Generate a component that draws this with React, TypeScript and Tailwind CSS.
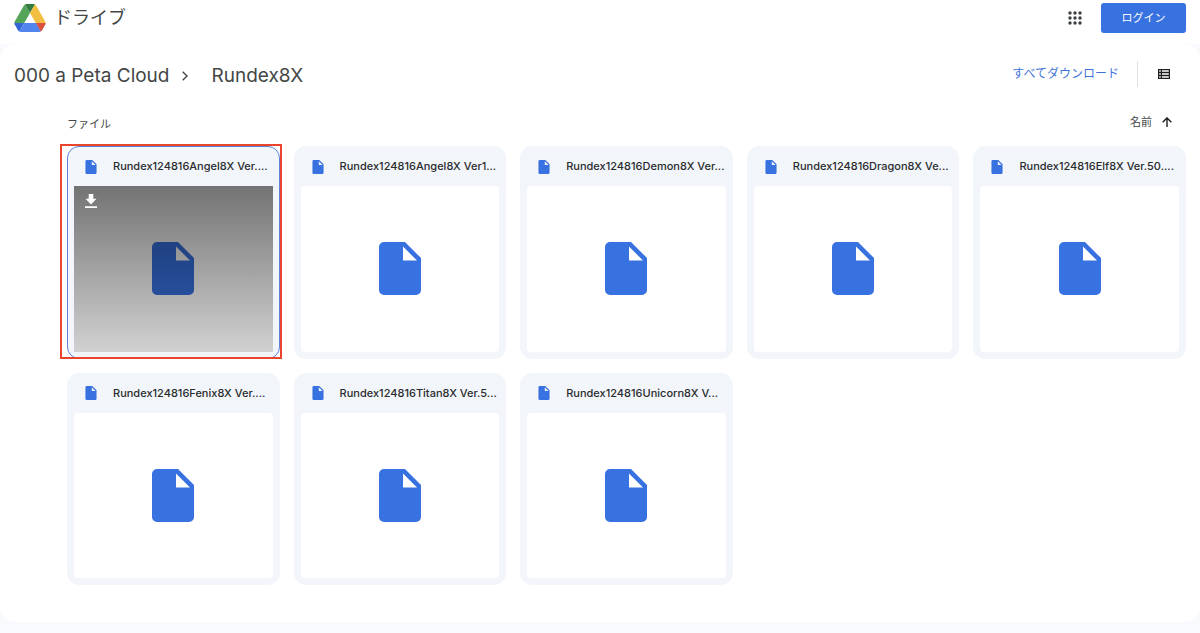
import React from "react";

interface DriveFile {
  id: number;
  name: string;
  selected?: boolean;
}

const files: DriveFile[] = [
  { id: 1, name: "Rundex124816Angel8X Ver....", selected: true },
  { id: 2, name: "Rundex124816Angel8X Ver1..." },
  { id: 3, name: "Rundex124816Demon8X Ver..." },
  { id: 4, name: "Rundex124816Dragon8X Ve..." },
  { id: 5, name: "Rundex124816Elf8X Ver.50...." },
  { id: 6, name: "Rundex124816Fenix8X Ver...." },
  { id: 7, name: "Rundex124816Titan8X Ver.5..." },
  { id: 8, name: "Rundex124816Unicorn8X V..." },
];

const DriveLogo = () => (
  <svg viewBox="0 0 87.3 78" className="h-7 w-8" aria-hidden="true">
    <path d="m6.6 66.85 3.85 6.65c.8 1.4 1.95 2.5 3.3 3.3l13.75-23.8h-27.5c0 1.55.4 3.1 1.2 4.5z" fill="#3367d6" />
    <path d="m43.65 25-13.75-23.8c-1.35.8-2.5 1.9-3.3 3.3l-25.4 44a9.06 9.06 0 0 0 -1.2 4.5h27.5z" fill="#54a55a" />
    <path d="m73.55 76.8c1.35-.8 2.5-1.9 3.3-3.3l1.6-2.75 7.65-13.25c.8-1.4 1.2-2.95 1.2-4.5h-27.5l5.85 11.5z" fill="#dc5040" />
    <path d="m43.65 25 13.75-23.8c-1.35-.8-2.9-1.2-4.5-1.2h-18.5c-1.6 0-3.15.45-4.5 1.2z" fill="#327c40" />
    <path d="m59.8 53h-32.3l-13.75 23.8c1.35.8 2.9 1.2 4.5 1.2h50.8c1.6 0 3.15-.45 4.5-1.2z" fill="#5284ee" />
    <path d="m73.4 26.5-12.7-22c-.8-1.4-1.95-2.5-3.3-3.3l-13.75 23.8 16.15 28h27.45c0-1.55-.4-3.1-1.2-4.5z" fill="#f2bf42" />
  </svg>
);

const FileIcon = ({ className = "" }) => (
  <svg viewBox="0 0 42 53" className={className} aria-hidden="true">
    <path
      fill="#3871e0"
      fillRule="evenodd"
      d="M5 0H26L42 16V48a5 5 0 0 1-5 5H5a5 5 0 0 1-5-5V5a5 5 0 0 1 5-5ZM24 4.500V18.500H38Z"
    />
  </svg>
);

const FileCard = ({ file }: { file: DriveFile }) => (
  <li
    className={`relative flex aspect-square flex-col rounded-xl border bg-[#f2f6fb] px-1.5 pb-1.5 ${
      file.selected ? "border-[#5b82d8]" : "border-[#f2f6fb]"
    }`}
  >
    <div className="flex h-[39px] shrink-0 items-center gap-4 pl-[11px]">
      <FileIcon className="h-3.5 w-3 shrink-0" />
      <span className="whitespace-nowrap text-[11px] font-medium text-[#2a2b2d]">
        {file.name}
      </span>
    </div>
    <div
      className={`relative flex flex-1 items-center justify-center bg-white ${
        file.selected ? "" : "rounded"
      }`}
    >
      <FileIcon className="h-[53px] w-[42px]" />
      {file.selected && (
        <div className="absolute inset-0 bg-linear-to-b from-black/55 to-black/18">
          <button type="button" aria-label="ダウンロード" className="ml-[11px] mt-2 block text-white">
            <svg viewBox="0 0 12 14" className="h-3.5 w-3" fill="currentColor" aria-hidden="true">
              <path d="M3.700 0h4.600v4.800H11.500L6 10.500.500 4.800h3.200ZM0 12.300h12V14H0Z" />
            </svg>
          </button>
        </div>
      )}
    </div>
    {file.selected && (
      <div className="pointer-events-none absolute -bottom-px -left-2 -right-[3px] -top-[3px] border-2 border-[#e8452c]" />
    )}
  </li>
);

export default function App() {
  return (
    <div className="min-h-screen bg-[#f8fafd] pb-2.5 font-[Inter,'Noto_Sans_CJK_JP',sans-serif] text-[#444746]">
      <header className="flex h-11 items-start justify-between bg-white pl-3.5 pr-3.5 pt-[3px]">
        <a href="#" className="flex items-center gap-2 text-lg leading-[30px]">
          <DriveLogo />
          ドライブ
        </a>
        <div className="flex items-center gap-[19px]">
          <button type="button" aria-label="アプリ">
            <svg viewBox="0 0 14 14" className="h-3.5 w-3.5" fill="#3c4043" aria-hidden="true">
              {[2, 7, 12].map((y) =>
                [2, 7, 12].map((x) => <circle key={`${x}-${y}`} cx={x} cy={y} r="1.700" />)
              )}
            </svg>
          </button>
          <button
            type="button"
            className="h-[30px] w-[85px] rounded-[3px] bg-[#3871e0] text-[11px] text-white"
          >
            ログイン
          </button>
        </div>
      </header>

      <main className="rounded-2xl bg-white pb-[37px] pl-3.5 pr-3.5">
        <div className="flex h-[60px] items-center justify-between">
          <nav className="flex items-center pt-1 text-[19px] leading-7">
            <a href="#">000 a Peta Cloud</a>
            <svg viewBox="0 0 6 10" className="ml-3 mr-6 h-2.5 w-1.5" aria-hidden="true">
              <path d="M.7.700 5 5 .7 9.300" fill="none" stroke="currentColor" strokeWidth="1.400" />
            </svg>
            <span>Rundex8X</span>
          </nav>
          <div className="flex items-center">
            <button type="button" className="text-xs text-[#3f73d8]">
              すべてダウンロード
            </button>
            <div className="ml-[18px] h-[26px] w-px bg-[#dfe1e5]" />
            <button type="button" aria-label="リスト表示" className="ml-5 mr-4">
              <svg viewBox="0 0 12 10" className="h-2.5 w-3" aria-hidden="true">
                <path
                  fill="#1f1f1f"
                  fillRule="evenodd"
                  d="M0 0h12v10H0ZM1.200 1.200v1.600h1.600V1.200ZM4 1.200v1.600h6.800V1.200ZM1.200 4.200v1.600h1.600V4.200ZM4 4.200v1.600h6.800V4.200ZM1.200 7.200v1.600h1.600V7.200ZM4 7.200v1.600h6.800V7.200Z"
                />
              </svg>
            </button>
          </div>
        </div>

        <section className="pl-[53px]">
          <div className="flex h-[42px] items-center justify-between pb-1.5">
            <h2 className="pt-1 text-[11px]">ファイル</h2>
            <button type="button" className="mr-3.5 flex items-center gap-2.5 text-[11px]">
              名前
              <svg viewBox="0 0 10 10" className="h-2.5 w-2.5" aria-hidden="true">
                <path d="M5 10V1M.7 5.200 5 .9l4.300 4.300" fill="none" stroke="#1f1f1f" strokeWidth="1.400" />
              </svg>
            </button>
          </div>
          <ul className="grid grid-cols-5 gap-3.5">
            {files.map((file) => (
              <FileCard key={file.id} file={file} />
            ))}
          </ul>
        </section>
      </main>
    </div>
  );
}
